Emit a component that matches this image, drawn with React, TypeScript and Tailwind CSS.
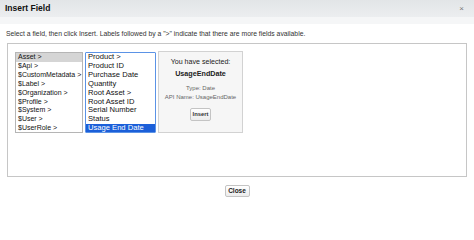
import React from "react";

const left = ["Asset >", "$Api >", "$CustomMetadata >", "$Label >", "$Organization >", "$Profile >", "$System >", "$User >", "$UserRole >"];
const mid = ["Product >", "Product ID", "Purchase Date", "Quantity", "Root Asset >", "Root Asset ID", "Serial Number", "Status", "Usage End Date"];

export default function App() {
  return (
    <div className="w-[474px] h-[203px] bg-white overflow-hidden text-[#222]" style={{ fontFamily: '"Liberation Sans", Arial, sans-serif' }}>
      <div className="h-[17px] bg-gradient-to-b from-[#e2e5e7] to-[#eceef0] flex items-center justify-between pl-[5px] pr-[10px]">
        <span className="text-[8.5px] font-bold text-[#111] leading-none">Insert Field</span>
        <span className="text-[8px] text-[#777] leading-none">×</span>
      </div>
      <div className="h-[7px] bg-[#f5f6f7]" />
      <div className="pl-[6px] pt-[5px] text-[6.8px] leading-[9px] text-[#333] whitespace-nowrap">
        Select a field, then click Insert. Labels followed by a "&gt;" indicate that there are more fields available.
      </div>
      <div className="ml-[7px] mt-[5px] w-[460px] h-[134px] border border-[#c6c6c6] pl-[7px] pt-[8px] flex items-start gap-[2px]">
        <div className="w-[68px] h-[81px] border border-[#b5b5b5] bg-white text-[7px] leading-[8.9px] text-[#111] overflow-hidden">
          {left.map((t, i) => (
            <div key={t} className={i === 0 ? "bg-[#d5d5d5] pl-[2px] whitespace-nowrap" : "pl-[2px] whitespace-nowrap"}>{t}</div>
          ))}
        </div>
        <div className="w-[71px] h-[81px] border-[1.5px] border-[#5b93e6] bg-white text-[7.6px] leading-[8.9px] text-[#111] rounded-[1px] overflow-hidden">
          {mid.map((t, i) => (
            <div key={t} className={i === 8 ? "bg-[#1b5fd9] text-white pl-[2px] whitespace-nowrap" : "pl-[2px] whitespace-nowrap"}>{t}</div>
          ))}
        </div>
        <div className="-mt-[1px] w-[85px] h-[82px] border border-[#d2d2d2] bg-[#f6f6f6] flex flex-col items-center pt-[6px]">
          <div className="text-[7.1px] leading-[9px] text-[#222]">You have selected:</div>
          <div className="mt-[1.5px] text-[7.2px] leading-[9px] font-bold text-[#222]">UsageEndDate</div>
          <div className="mt-[6px] text-[6px] leading-[8px] text-[#666]">Type: Date</div>
          <div className="mt-[1px] text-[6px] leading-[8px] text-[#666]">API Name: UsageEndDate</div>
          <button className="mt-[7px] w-[21px] h-[13px] border border-[#c4c4c4] rounded-[2px] bg-gradient-to-b from-white to-[#ececec] text-[5.8px] font-bold text-[#333] flex items-center justify-center">Insert</button>
        </div>
      </div>
      <div className="flex justify-center mt-[8px]">
        <button className="w-[25px] h-[12px] border border-[#c4c4c4] rounded-[2px] bg-gradient-to-b from-white to-[#ececec] text-[6.5px] font-bold text-[#222] flex items-center justify-center">Close</button>
      </div>
    </div>
  );
}
